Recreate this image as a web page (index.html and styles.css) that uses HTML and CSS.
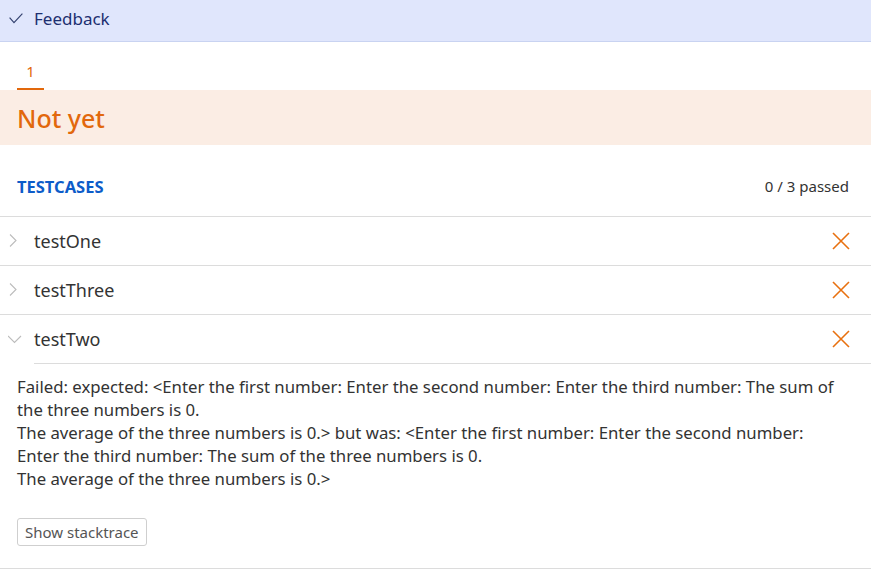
FILE: index.html
```html
<!DOCTYPE html>
<html lang="en">
<head>
<meta charset="utf-8">
<title>Feedback</title>
<link rel="stylesheet" href="styles.css">
</head>
<body>
<div class="page">
  <header class="topbar">
    <svg class="check" width="14" height="11" viewBox="0 0 14 11"><path d="M0.6 4.6 L5 9.6 L13.4 0.6" fill="none" stroke="#34426f" stroke-width="1.2"/></svg>
    <span class="topbar-title">Feedback</span>
  </header>
  <nav class="tabs">
    <div class="tab active">1</div>
  </nav>
  <div class="status">Not yet</div>
  <div class="tc-head">
    <span class="tc-title">TESTCASES</span>
    <span class="tc-count">0 / 3 passed</span>
  </div>
  <div class="tc-list">
    <div class="tc-row">
      <svg class="chev" width="20" height="16" viewBox="0 0 20 16"><path d="M2 1.5 L8 7.5 L2 13.5" fill="none" stroke="#bcbcbc" stroke-width="1.1"/></svg>
      <span class="tc-name">testOne</span>
      <svg class="fail" width="18" height="18" viewBox="0 0 18 18"><path d="M1 1 L17 17 M17 1 L1 17" fill="none" stroke="#e8700f" stroke-width="1.6"/></svg>
    </div>
    <div class="tc-row">
      <svg class="chev" width="20" height="16" viewBox="0 0 20 16"><path d="M2 1.5 L8 7.5 L2 13.5" fill="none" stroke="#bcbcbc" stroke-width="1.1"/></svg>
      <span class="tc-name">testThree</span>
      <svg class="fail" width="18" height="18" viewBox="0 0 18 18"><path d="M1 1 L17 17 M17 1 L1 17" fill="none" stroke="#e8700f" stroke-width="1.6"/></svg>
    </div>
    <div class="tc-row open">
      <svg class="chev" width="20" height="16" viewBox="0 0 20 16"><path d="M0 5 L6.5 11.5 L13 5" fill="none" stroke="#bcbcbc" stroke-width="1.1"/></svg>
      <span class="tc-name">testTwo</span>
      <svg class="fail" width="18" height="18" viewBox="0 0 18 18"><path d="M1 1 L17 17 M17 1 L1 17" fill="none" stroke="#e8700f" stroke-width="1.6"/></svg>
    </div>
    <div class="tc-detail">
      <p class="tc-msg">Failed: expected: &lt;Enter the first number: Enter the second number: Enter the third number: The sum of the three numbers is 0.
The average of the three numbers is 0.&gt; but was: &lt;Enter the first number: Enter the second number: Enter the third number: The sum of the three numbers is 0.
The average of the three numbers is 0.&gt;</p>
      <button class="btn" type="button">Show stacktrace</button>
    </div>
  </div>
</div>
</body>
</html>
```

FILE: styles.css
```css
* { box-sizing: border-box; }
html, body { margin: 0; padding: 0; background: #fff; }
body { font-family: "Noto Sans", "Open Sans", sans-serif; color: #333; }

.topbar {
  height: 42px;
  background: #e0e6fc;
  border-bottom: 1px solid #c9d3f1;
  display: flex;
  align-items: center;
  padding: 0 0 4px 9px;
}
.check { display: block; margin-right: 11px; margin-top: 0; }
.topbar-title { font-size: 17px; color: #1d2f70; }

.tabs {
  height: 48px;
  display: flex;
  padding-left: 17px;
}
.tab {
  width: 27px;
  text-align: center;
  font-size: 15px;
  line-height: 20px;
  padding-top: 19px;
  color: #e2680c;
}
.tab.active { border-bottom: 2px solid #e2680c; }

.status {
  height: 55px;
  background: #fbede4;
  color: #e2680c;
  font-size: 25px;
  line-height: 57px;
  padding-left: 17px;
  font-weight: 500;
}

.tc-head {
  height: 71px;
  padding: 11px 22px 0 17px;
  display: flex;
  align-items: center;
  justify-content: space-between;
}
.tc-title { font-size: 16.5px; font-weight: 700; color: #0d5cc9; }
.tc-count { font-size: 15px; color: #333; }

.tc-list { border-bottom: 1px solid #dcdcdc; }
.tc-row {
  height: 49px;
  border-top: 1px solid #dcdcdc;
  display: flex;
  align-items: center;
  padding: 0 21px 0 8px;
}
.chev { display: block; margin-right: 6px; }
.tc-name { flex: 1; font-size: 18px; color: #333; }
.fail { display: block; }

.tc-detail {
  margin-left: 34px;
  border-top: 1px solid #dcdcdc;
  padding: 11px 30px 22px 0;
}
.tc-msg {
  margin: 0 0 0 -17px;
  white-space: pre-wrap;
  font-size: 16.75px;
  line-height: 23px;
  color: #333;
}
.btn {
  margin: 28px 0 0 -17px;
  display: block;
  height: 28px;
  padding: 0 7px;
  font-family: inherit;
  font-size: 15px;
  color: #555;
  background: #fff;
  border: 1px solid #cfcfcf;
  border-radius: 3px;
}
```
